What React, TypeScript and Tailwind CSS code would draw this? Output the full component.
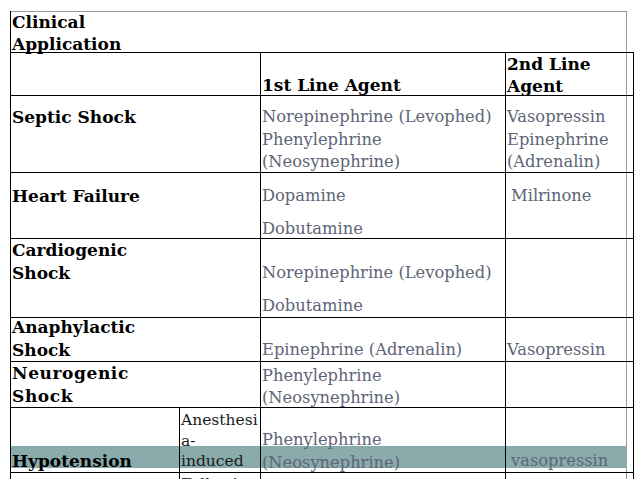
const serif = "font-['DejaVu_Serif',serif]";

function Agent({ lines, className = "" }: { lines: string[]; className?: string }) {
  return (
    <div className={`text-[#5e6577] text-[16.3px] leading-[22.5px] whitespace-nowrap ${className}`}>
      {lines.map((l) => (
        <div key={l}>{l}</div>
      ))}
    </div>
  );
}

function Cell({ span = 1, children }: { span?: number; children?: React.ReactNode }) {
  return (
    <div className={`border-r border-b border-black pl-[1px] ${span === 2 ? "col-span-2" : ""}`}>
      {children}
    </div>
  );
}

export default function App() {
  const label = "font-bold text-black text-[17px] leading-[22px] whitespace-nowrap";
  const sub = "text-[#1a1a1a] text-[15.5px] leading-[20.5px] whitespace-nowrap";

  return (
    <div className={`relative w-[638px] h-[479px] overflow-hidden bg-white ${serif}`}>
      {/* slide frame and highlight band */}
      <div className="absolute left-[10px] top-[11px] w-[617px] h-[500px] border border-[#8e9c9c]" />
      <div className="absolute left-[10px] top-[446px] w-[617px] h-[22px] bg-[#8aabab]" />

      <div className="relative z-10 ml-[10px] mt-[11px] w-[624px] border-l border-black grid grid-cols-[169px_81px_245px_128px] grid-rows-[42px_43px_77px_66px_79px_44px_46px_65px_40px]">
        <div className="col-span-4 border-b border-black pl-[1px]">
          <div className={`${label} leading-[21px]`}>
            Clinical
            <br />
            Application
          </div>
        </div>

        <Cell span={2} />
        <Cell>
          <div className={`${label} pt-[21px]`}>1st Line Agent</div>
        </Cell>
        <Cell>
          <div className={label}>
            2nd Line
            <br />
            Agent
          </div>
        </Cell>

        <Cell span={2}>
          <div className={`${label} pt-[10px]`}>Septic Shock</div>
        </Cell>
        <Cell>
          <Agent className="pt-[10px]" lines={["Norepinephrine (Levophed)", "Phenylephrine", "(Neosynephrine)"]} />
        </Cell>
        <Cell>
          <Agent className="pt-[10px]" lines={["Vasopressin", "Epinephrine", "(Adrenalin)"]} />
        </Cell>

        <Cell span={2}>
          <div className={`${label} pt-[12px]`}>Heart Failure</div>
        </Cell>
        <Cell>
          <Agent className="pt-[12px]" lines={["Dopamine"]} />
          <Agent className="pt-[10px]" lines={["Dobutamine"]} />
        </Cell>
        <Cell>
          <Agent className="pt-[12px] pl-[4px]" lines={["Milrinone"]} />
        </Cell>

        <Cell span={2}>
          <div className={`${label} leading-[23px]`}>
            Cardiogenic
            <br />
            Shock
          </div>
        </Cell>
        <Cell>
          <Agent className="pt-[23px]" lines={["Norepinephrine (Levophed)"]} />
          <Agent className="pt-[10px]" lines={["Dobutamine"]} />
        </Cell>
        <Cell />

        <Cell span={2}>
          <div className={`${label} leading-[23px] -mt-[2px]`}>
            Anaphylactic
            <br />
            Shock
          </div>
        </Cell>
        <Cell>
          <Agent className="pt-[21px]" lines={["Epinephrine (Adrenalin)"]} />
        </Cell>
        <Cell>
          <Agent className="pt-[21px]" lines={["Vasopressin"]} />
        </Cell>

        <Cell span={2}>
          <div className={`${label} leading-[23px] tracking-[0.6px]`}>
            Neurogenic
            <br />
            Shock
          </div>
        </Cell>
        <Cell>
          <Agent className="pt-[3px] leading-[22px]" lines={["Phenylephrine", "(Neosynephrine)"]} />
        </Cell>
        <Cell />

        <Cell>
          <div className={`${label} pt-[42px]`}>Hypotension</div>
        </Cell>
        <Cell>
          <div className={`${sub} pt-[2px]`}>
            Anesthesi
            <br />
            a-
            <br />
            induced
          </div>
        </Cell>
        <Cell>
          <Agent className="pt-[21px] leading-[21px]" lines={["Phenylephrine", "(Neosynephrine)"]} />
        </Cell>
        <Cell>
          <Agent className="pt-[42px] pl-[4px]" lines={["vasopressin"]} />
        </Cell>

        <Cell />
        <Cell>
          <div className={`${sub} pt-[1px]`}>Followi</div>
        </Cell>
        <Cell />
        <Cell />
      </div>
    </div>
  );
}
